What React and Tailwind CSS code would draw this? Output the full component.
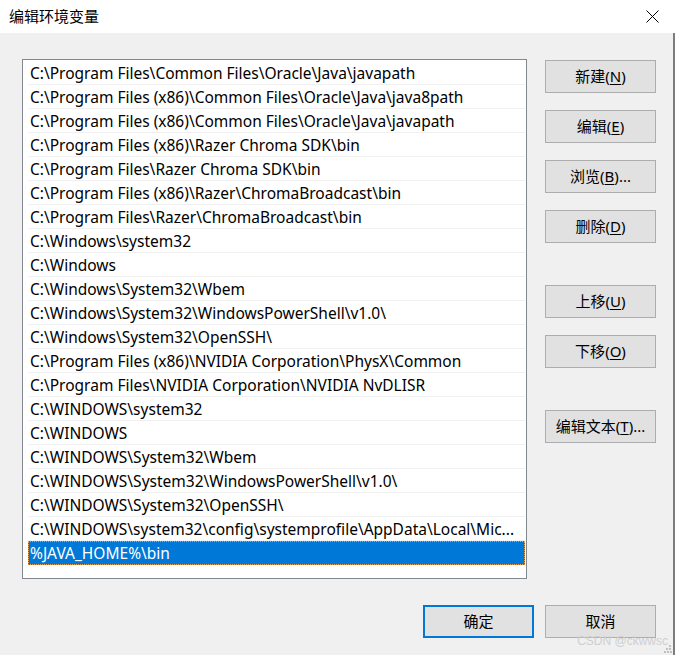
const paths = [
  'C:\\Program Files\\Common Files\\Oracle\\Java\\javapath',
  'C:\\Program Files (x86)\\Common Files\\Oracle\\Java\\java8path',
  'C:\\Program Files (x86)\\Common Files\\Oracle\\Java\\javapath',
  'C:\\Program Files (x86)\\Razer Chroma SDK\\bin',
  'C:\\Program Files\\Razer Chroma SDK\\bin',
  'C:\\Program Files (x86)\\Razer\\ChromaBroadcast\\bin',
  'C:\\Program Files\\Razer\\ChromaBroadcast\\bin',
  'C:\\Windows\\system32',
  'C:\\Windows',
  'C:\\Windows\\System32\\Wbem',
  'C:\\Windows\\System32\\WindowsPowerShell\\v1.0\\',
  'C:\\Windows\\System32\\OpenSSH\\',
  'C:\\Program Files (x86)\\NVIDIA Corporation\\PhysX\\Common',
  'C:\\Program Files\\NVIDIA Corporation\\NVIDIA NvDLISR',
  'C:\\WINDOWS\\system32',
  'C:\\WINDOWS',
  'C:\\WINDOWS\\System32\\Wbem',
  'C:\\WINDOWS\\System32\\WindowsPowerShell\\v1.0\\',
  'C:\\WINDOWS\\System32\\OpenSSH\\',
  'C:\\WINDOWS\\system32\\config\\systemprofile\\AppData\\Local\\Mic...',
  '%JAVA_HOME%\\bin',
];

const font = { fontFamily: '"Noto Sans", "Noto Sans CJK SC", sans-serif' };

function Btn({ label, mnemonic, suffix = '', className = '' }) {
  return (
    <button
      className={`w-[111px] h-[33px] bg-[#e1e1e1] border border-[#adadad] text-[15px] text-black flex items-center justify-center ${className}`}
    >
      {label}(<span className="underline underline-offset-2">{mnemonic}</span>){suffix}
    </button>
  );
}

export default function App() {
  return (
    <div className="w-[675px] h-[655px] bg-[#f0f0f0] flex flex-col relative overflow-hidden" style={font}>
      {/* title bar */}
      <div className="h-[33px] bg-white flex items-center justify-between pl-[9px] pr-[15px] shrink-0">
        <span className="text-[15px] text-black" style={{ fontFamily: '"Noto Sans CJK SC", sans-serif' }}>编辑环境变量</span>
        <svg width="13" height="13" viewBox="0 0 13 13" className="mr-[1px]">
          <path d="M0.5 0.5 L12.5 12.5 M12.5 0.5 L0.5 12.5" stroke="#000" strokeWidth="1" />
        </svg>
      </div>

      <div className="flex-1 flex flex-col pl-[22px] pt-[26px]">
        <div className="flex">
          {/* path list */}
          <div className="w-[505px] h-[520px] bg-white border border-[#828790] pt-[1px] pl-[5px] pr-[1px]">
            {paths.map((p, i) =>
              i === paths.length - 1 ? (
                <div
                  key={i}
                  className="h-[24px] bg-[#0078d7] text-white text-[15.5px] leading-[24px] pl-[2px] outline outline-1 outline-dotted outline-[#e8a35a] -outline-offset-1 whitespace-nowrap"
                >
                  {p}
                </div>
              ) : (
                <div
                  key={i}
                  className="h-[24px] border-b border-[#f0f0f0] text-[15.5px] text-black leading-[25px] pl-[2px] whitespace-nowrap overflow-hidden"
                >
                  {p}
                </div>
              )
            )}
          </div>

          {/* side buttons */}
          <div className="ml-[18px] pt-[1px] flex flex-col">
            <Btn label="新建" mnemonic="N" />
            <Btn label="编辑" mnemonic="E" className="mt-[17px]" />
            <Btn label="浏览" mnemonic="B" suffix="..." className="mt-[17px]" />
            <Btn label="删除" mnemonic="D" className="mt-[17px]" />
            <Btn label="上移" mnemonic="U" className="mt-[42px]" />
            <Btn label="下移" mnemonic="O" className="mt-[17px]" />
            <Btn label="编辑文本" mnemonic="T" suffix="..." className="mt-[42px]" />
          </div>
        </div>

        {/* bottom buttons */}
        <div className="flex justify-end gap-[11px] mt-[26px] pr-[19px]">
          <button className="w-[111px] h-[33px] bg-[#e1e1e1] border-2 border-[#0078d7] text-[15px] text-black">确定</button>
          <button className="w-[111px] h-[33px] bg-[#e1e1e1] border border-[#adadad] text-[15px] text-black">取消</button>
        </div>
      </div>

      {/* window edge */}
      <div className="absolute right-0 top-[33px] bottom-0 w-[2px] bg-[#7c7c7c]" />

      {/* watermark + grip */}
      <div className="absolute right-[7px] bottom-[8px] text-[12px] text-[#cfcfcf] leading-none" style={{ fontFamily: '"Liberation Sans", sans-serif' }}>
        CSDN @ckwwsc
      </div>
      <svg width="8" height="8" viewBox="0 0 8 8" className="absolute right-[3px] bottom-[2px]">
        <rect x="5" y="0" width="2" height="2" fill="#c0c0c0" />
        <rect x="2" y="3" width="2" height="2" fill="#c0c0c0" />
        <rect x="5" y="3" width="2" height="2" fill="#c0c0c0" />
        <rect x="0" y="6" width="2" height="2" fill="#c0c0c0" />
        <rect x="3" y="6" width="2" height="2" fill="#c0c0c0" />
        <rect x="6" y="6" width="2" height="2" fill="#c0c0c0" />
      </svg>
    </div>
  );
}
